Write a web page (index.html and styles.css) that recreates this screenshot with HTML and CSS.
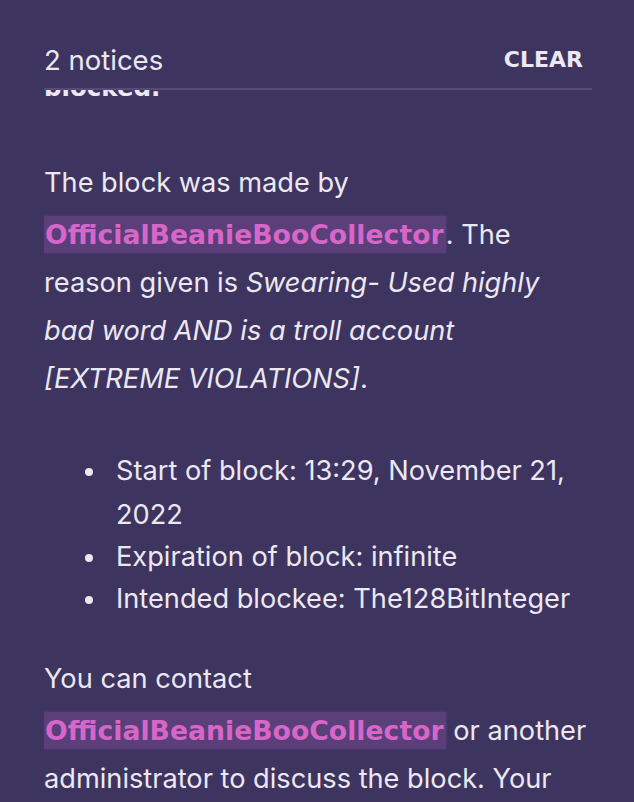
FILE: index.html
```html
<!DOCTYPE html>
<html lang="en">
<head>
<meta charset="utf-8">
<title>Notices</title>
<link rel="stylesheet" href="styles.css">
</head>
<body>
<div class="panel">
  <div class="header">
    <span class="count">2 notices</span>
    <span class="clear">CLEAR</span>
  </div>
  <div class="viewport">
    <div class="inner">
      <h3 class="title">blocked.</h3>
      <p>The block was made by <a class="user">OfficialBeanieBooCollector</a>. The reason given is <em>Swearing- Used highly bad word AND is a troll account [EXTREME VIOLATIONS]</em>.</p>
      <ul class="facts">
        <li>Start of block: 13:29, November 21, 2022</li>
        <li>Expiration of block: infinite</li>
        <li>Intended blockee: The128BitInteger</li>
      </ul>
      <p>You can contact <a class="user">OfficialBeanieBooCollector</a> or another administrator to discuss the block. Your</p>
    </div>
  </div>
</div>
</body>
</html>
```

FILE: styles.css
```css
html, body {
  margin: 0;
  padding: 0;
  background: #3e3460;
  height: 100%;
}
body {
  color: #ece8f1;
  font-family: Inter, "Noto Sans", sans-serif;
}
.panel {
  padding: 0 42px 0 44px;
  height: 802px;
  display: flex;
  flex-direction: column;
  overflow: hidden;
}
.header {
  display: flex;
  justify-content: space-between;
  align-items: center;
  padding-top: 42px;
  padding-bottom: 10px;
  border-bottom: 2px solid #554b76;
  line-height: 36px;
}
.count {
  font-size: 27.5px;
  font-weight: 400;
}
.clear {
  font-family: "DejaVu Sans", sans-serif;
  font-size: 22px;
  font-weight: 700;
  margin-right: 9px;
}
.viewport {
  flex: 1;
  overflow: hidden;
}
.inner {
  margin-top: -26px;
  font-size: 27.2px;
  line-height: 48px;
}
.title {
  margin: 0 0 47px;
  font-family: "DejaVu Sans", sans-serif;
  font-weight: 700;
  font-size: 24.5px;
  line-height: 48px;
}
p {
  margin: 0;
}
.user {
  display: inline-block;
  font-family: "DejaVu Sans", sans-serif;
  font-weight: 700;
  font-size: 26.7px;
  line-height: 31px;
  margin-top: 9px;
  color: #d766c8;
  background: #5b3f78;
  padding: 3px 2px 3px 1px;
  box-shadow: 0 0 3px #5b3f78;
}
em {
  font-style: italic;
}
.facts {
  margin: 46px 0 34px;
  padding-left: 72px;
  line-height: 43px;
  list-style: none;
}
.facts li {
  line-height: 44px;
}
.facts li + li {
  margin-top: -2px;
}
.facts li::before {
  content: "";
  display: inline-block;
  width: 8px;
  height: 8px;
  border-radius: 50%;
  background: #ece8f1;
  margin-left: -31px;
  margin-right: 23px;
  vertical-align: 4px;
}
```
